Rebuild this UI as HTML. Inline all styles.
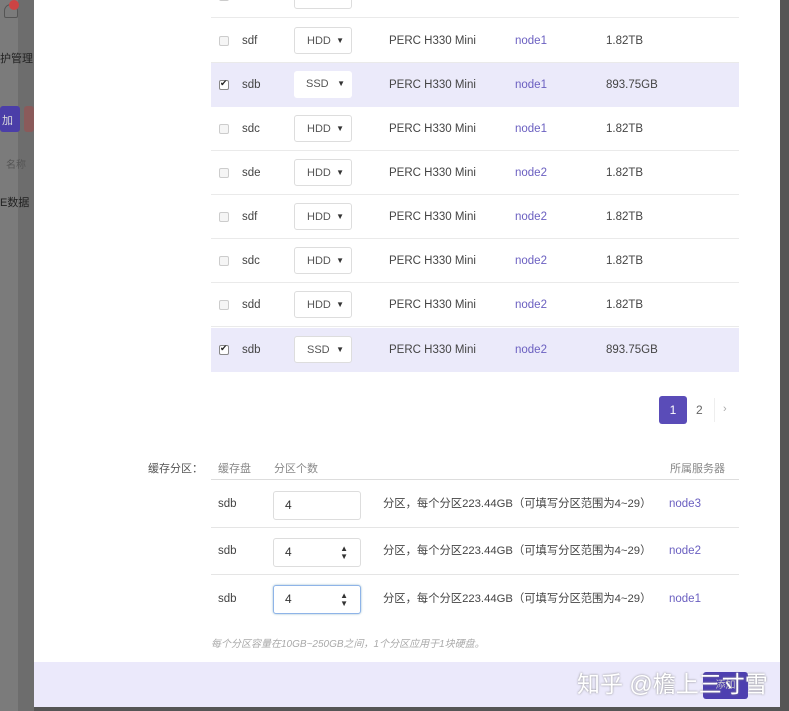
<!DOCTYPE html>
<html><head><meta charset="utf-8"><style>
*{box-sizing:border-box;margin:0;padding:0}
body{width:789px;height:711px;overflow:hidden;background:#555;font-family:"Liberation Sans","Noto Sans CJK SC",sans-serif;position:relative;color:#444}
.l1{position:absolute;left:0;top:0;width:18px;height:711px;background:#7b7b7b}
.l2{position:absolute;left:18px;top:0;width:16px;height:711px;background:#6d6d6d}
.modal{position:absolute;left:34px;top:0;width:746px;height:707px;background:#fff}
.foot{position:absolute;left:34px;top:662px;width:746px;height:45px;background:#ebe9fb}
.ab{position:absolute;white-space:nowrap}
.row{position:absolute;left:211px;width:528px;height:44px;border-bottom:1px solid #eaeaea}
.row.sel{background:#ebeafa;border-bottom:none}
.row span{position:absolute;top:16px;font-size:11.5px;line-height:13px;color:#444}
.cb{position:absolute;left:8px;top:17px;width:10px;height:10px;border:1px solid #ccc;border-radius:2px;background:#f5f5f5}
.sel .cb{border-color:#888;background:#fff}
.sel .cb:after{content:"✔";position:absolute;left:0;top:-3px;font-size:9px;color:#222}
.sb{position:absolute;left:83px;top:8px;width:58px;height:27px;border:1px solid #ddd;border-radius:3px;background:#fff;font-size:11px;color:#555}
.sb i{position:absolute;left:12px;top:7px;font-style:normal}
.sb b{position:absolute;right:7px;top:8px;font-size:8px;color:#333}
.n{color:#6a5fc0!important}
.prow{position:absolute;left:211px;width:528px;height:47px;border-bottom:1px solid #e5e5e5;font-size:11.5px;line-height:13px}
.inp{position:absolute;left:62px;top:10px;width:88px;height:29px;border:1px solid #ddd;border-radius:3px;background:#fff}
.inp i{position:absolute;left:11px;top:7px;font-style:normal;font-size:12px;color:#333}
.inp b{position:absolute;right:12px;top:6px;font-size:8px;line-height:8px;color:#333}
</style></head><body>
<div class="l1"></div><div class="l2"></div>
<div class="ab" style="left:0;top:50px;font-size:11px;color:#222">护管理</div>
<div class="ab" style="left:0;top:106px;width:20px;height:26px;background:#4b3ea8;border-radius:3px;color:#ddd;font-size:11px;padding:6px 0 0 2px">加</div>
<div class="ab" style="left:24px;top:106px;width:10px;height:26px;background:#8a5a5a;border-radius:3px"></div>
<div class="ab" style="left:6px;top:156px;font-size:10px;color:#555">名称</div>
<div class="ab" style="left:0;top:194px;font-size:11px;color:#222">E数据</div>
<div class="ab" style="left:4px;top:4px;width:14px;height:14px;border:1.5px solid #555;border-radius:7px 7px 2px 2px"></div>
<div class="ab" style="left:9px;top:0;width:10px;height:10px;border-radius:5px;background:#c44;"></div>
<div class="modal"></div>
<div class="foot"></div>

<div class="row" style="top:-26px"><div class="cb"></div><span style="left:31px">sdb</span><div class="sb"><i>HDD</i><b>▼</b></div><span style="left:178px">PERC H330 Mini</span><span class="n" style="left:304px">node1</span><span style="left:395px">1.82TB</span></div>
<div class="row" style="top:19px"><div class="cb"></div><span style="left:31px">sdf</span><div class="sb"><i>HDD</i><b>▼</b></div><span style="left:178px">PERC H330 Mini</span><span class="n" style="left:304px">node1</span><span style="left:395px">1.82TB</span></div>
<div class="row sel" style="top:63px"><div class="cb"></div><span style="left:31px">sdb</span><div class="sb" style="border:none"><i>SSD</i><b>▼</b></div><span style="left:178px">PERC H330 Mini</span><span class="n" style="left:304px">node1</span><span style="left:395px">893.75GB</span></div>
<div class="row" style="top:107px"><div class="cb"></div><span style="left:31px">sdc</span><div class="sb"><i>HDD</i><b>▼</b></div><span style="left:178px">PERC H330 Mini</span><span class="n" style="left:304px">node1</span><span style="left:395px">1.82TB</span></div>
<div class="row" style="top:151px"><div class="cb"></div><span style="left:31px">sde</span><div class="sb"><i>HDD</i><b>▼</b></div><span style="left:178px">PERC H330 Mini</span><span class="n" style="left:304px">node2</span><span style="left:395px">1.82TB</span></div>
<div class="row" style="top:195px"><div class="cb"></div><span style="left:31px">sdf</span><div class="sb"><i>HDD</i><b>▼</b></div><span style="left:178px">PERC H330 Mini</span><span class="n" style="left:304px">node2</span><span style="left:395px">1.82TB</span></div>
<div class="row" style="top:239px"><div class="cb"></div><span style="left:31px">sdc</span><div class="sb"><i>HDD</i><b>▼</b></div><span style="left:178px">PERC H330 Mini</span><span class="n" style="left:304px">node2</span><span style="left:395px">1.82TB</span></div>
<div class="row" style="top:283px"><div class="cb"></div><span style="left:31px">sdd</span><div class="sb"><i>HDD</i><b>▼</b></div><span style="left:178px">PERC H330 Mini</span><span class="n" style="left:304px">node2</span><span style="left:395px">1.82TB</span></div>
<div class="row sel" style="top:328px"><div class="cb"></div><span style="left:31px">sdb</span><div class="sb"><i>SSD</i><b>▼</b></div><span style="left:178px">PERC H330 Mini</span><span class="n" style="left:304px">node2</span><span style="left:395px">893.75GB</span></div>

<div class="ab" style="left:659px;top:396px;width:28px;height:28px;background:#5a4cb8;border-radius:3px;color:#fff;font-size:12px;text-align:center;line-height:28px">1</div>
<div class="ab" style="left:696px;top:403px;font-size:12px;color:#666">2</div>
<div class="ab" style="left:714px;top:398px;width:1px;height:24px;background:#eee"></div>
<div class="ab" style="left:723px;top:403px;font-size:11px;color:#aaa">›</div>

<div class="ab" style="left:148px;top:460px;font-size:11px;color:#555">缓存分区：</div>
<div class="ab" style="left:218px;top:460px;font-size:11px;color:#888">缓存盘</div>
<div class="ab" style="left:274px;top:460px;font-size:11px;color:#888">分区个数</div>
<div class="ab" style="left:670px;top:460px;font-size:11px;color:#888">所属服务器</div>
<div class="ab" style="left:211px;top:479px;width:528px;height:1px;background:#ddd"></div>
<div class="prow" style="top:481px"><span class="ab" style="left:7px;top:17px">sdb</span><div class="inp"><i>4</i></div><span class="ab" style="left:172px;top:17px;font-size:11.3px">分区，每个分区223.44GB（可填写分区范围为4~29）</span><span class="ab n" style="left:458px;top:17px">node3</span></div>
<div class="prow" style="top:528px"><span class="ab" style="left:7px;top:17px">sdb</span><div class="inp"><i>4</i><b>▲<br>▼</b></div><span class="ab" style="left:172px;top:17px;font-size:11.3px">分区，每个分区223.44GB（可填写分区范围为4~29）</span><span class="ab n" style="left:458px;top:17px">node2</span></div>
<div class="prow" style="top:575px;border:none"><span class="ab" style="left:7px;top:18px">sdb</span><div class="inp" style="border-color:#8fb4e8;box-shadow:0 0 2px #9bc"><i>4</i><b>▲<br>▼</b></div><span class="ab" style="left:172px;top:18px;font-size:11.3px">分区，每个分区223.44GB（可填写分区范围为4~29）</span><span class="ab n" style="left:458px;top:18px">node1</span></div>
<div class="ab" style="left:211px;top:635px;font-size:10px;color:#aaa;font-style:italic">每个分区容量在10GB~250GB之间，1个分区应用于1块硬盘。</div>

<div class="ab" style="left:703px;top:672px;width:45px;height:27px;background:#4d3fb0;border-radius:3px;color:#ccc;font-size:10px;text-align:center;line-height:27px">添加</div>
<div class="ab" style="left:577px;top:665px;font-size:23px;color:#fff;text-shadow:0 0 2px #888">知乎 @檐上三寸雪</div>
</body></html>
